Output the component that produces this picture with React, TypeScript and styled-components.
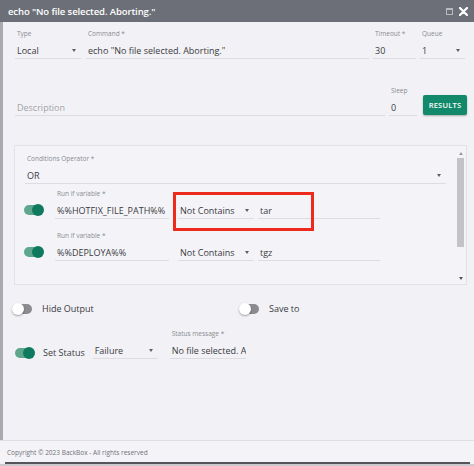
import React from "react";
import styled, { createGlobalStyle } from "styled-components";

const GlobalStyle = createGlobalStyle`
  html, body {
    margin: 0;
    padding: 0;
    background: #f2f2f6;
  }
  * {
    box-sizing: border-box;
  }
`;

const color = {
  header: "#6c6f78",
  bg: "#f2f2f6",
  strip: "#a9a9af",
  text: "#3a3a3e",
  label: "#8a8a90",
  line: "#dcdce1",
  green: "#13896b",
  red: "#ee2a1c"
};

const Frame = styled.div`
  width: 474px;
  height: 466px;
  display: flex;
  flex-direction: column;
  background: ${color.bg};
  font-family: "Open Sans", "Liberation Sans", sans-serif;
  color: ${color.text};
  overflow: hidden;
`;

const Header = styled.div`
  height: 22px;
  flex: none;
  background: ${color.header};
  display: flex;
  align-items: center;
  padding: 0 6px 0 8px;
`;

const Title = styled.div`
  flex: 1;
  color: #ffffff;
  font-size: 9.5px;
  font-weight: 600;
  letter-spacing: -0.1px;
`;

const HeaderIcons = styled.div`
  display: flex;
  align-items: center;
  gap: 6px;
`;

const Body = styled.div`
  flex: 1;
  border-left: 3px solid ${color.strip};
  padding: 7px 7px 0 12px;
  display: flex;
  flex-direction: column;
`;

const Row = styled.div<{ $top?: number }>`
  display: flex;
  align-items: flex-end;
  margin-top: ${(p) => p.$top ?? 0}px;
`;

const FieldWrap = styled.div<{ $w: number; $gap?: number }>`
  width: ${(p) => p.$w}px;
  margin-left: ${(p) => p.$gap ?? 0}px;
  flex: none;
  display: flex;
  flex-direction: column;
`;

const Label = styled.div`
  height: 9px;
  line-height: 9px;
  font-size: 6.5px;
  color: ${color.label};
  white-space: nowrap;
  padding-left: 2px;
`;

const ValueBox = styled.div<{ $placeholder?: boolean }>`
  height: 21px;
  border-bottom: 1px solid ${color.line};
  display: flex;
  align-items: center;
  justify-content: space-between;
  padding: 5px 5px 0 2px;
  font-size: 9px;
  color: ${(p) => (p.$placeholder ? "#a3a3a8" : color.text)};
  white-space: nowrap;
  overflow: hidden;
`;

const ValueText = styled.span`
  flex: none;
`;

const Caret = styled.span`
  flex: none;
  width: 0;
  height: 0;
  border-left: 2.5px solid transparent;
  border-right: 2.5px solid transparent;
  border-top: 3px solid #5e5e64;
`;

const ResultsButton = styled.button`
  margin-left: 6px;
  width: 46px;
  height: 20px;
  margin-bottom: 1px;
  border: none;
  border-radius: 2px;
  background: ${color.green};
  color: #ffffff;
  font-family: inherit;
  font-size: 7.5px;
  font-weight: 600;
  letter-spacing: 0.2px;
  box-shadow: 0 1px 2px rgba(0, 0, 0, 0.3);
  padding: 0;
`;

const Panel = styled.div`
  position: relative;
  margin: 29px 0 0 -1px;
  height: 140px;
  border: 1px solid #e1e1e6;
  background: #f4f4f8;
  display: flex;
  padding: 3px 1px 1px 10px;
`;

const PanelContent = styled.div`
  flex: 1;
  padding-top: 5px;
  display: flex;
  flex-direction: column;
`;

const ScrollBar = styled.div`
  width: 9px;
  margin-left: 4px;
  display: flex;
  flex-direction: column;
  align-items: center;
  justify-content: space-between;
  padding: 3px 0 3px;
`;

const ScrollArrow = styled.span<{ $up?: boolean }>`
  width: 0;
  height: 0;
  border-left: 2.5px solid transparent;
  border-right: 2.5px solid transparent;
  ${(p) =>
    p.$up
      ? "border-bottom: 3px solid #9a9aa0;"
      : "border-top: 3px solid #55555b;"}
`;

const ScrollThumb = styled.div`
  width: 7px;
  height: 89px;
  margin-top: 3px;
  background: #c3c3c7;
  margin-bottom: auto;
`;

const CondRow = styled.div<{ $top: number }>`
  display: flex;
  align-items: flex-end;
  margin-top: ${(p) => p.$top}px;
`;

const ToggleSlot = styled.div`
  width: 19px;
  height: 21px;
  display: flex;
  align-items: center;
  flex: none;
  margin-left: -1px;
  padding-top: 3px;
`;

const Track = styled.span<{ $on?: boolean }>`
  position: relative;
  display: inline-block;
  width: 19px;
  height: 10px;
  border-radius: 5px;
  flex: none;
  background: ${(p) => (p.$on ? "#5fa68f" : "#8c8c90")};
  &::after {
    content: "";
    position: absolute;
    top: -1px;
    ${(p) => (p.$on ? "right: -1px;" : "left: -1px;")}
    width: 12px;
    height: 12px;
    border-radius: 50%;
    background: ${(p) => (p.$on ? "#0f7a5d" : "#ffffff")};
    box-shadow: ${(p) => (p.$on ? "none" : "0 1px 2px rgba(0,0,0,0.35)")};
  }
`;

const Highlight = styled.div`
  position: absolute;
  left: 158px;
  top: 46px;
  width: 141px;
  height: 39px;
  border: 3.5px solid ${color.red};
  pointer-events: none;
`;

const OptionsGrid = styled.div`
  display: grid;
  grid-template-columns: 227px 1fr;
  margin: 17px 0 0 -2px;
  height: 10px;
  align-items: center;
`;

const OptionItem = styled.div`
  display: flex;
  align-items: center;
  gap: 10px;
  font-size: 9px;
  color: ${color.text};
`;

const StatusRow = styled.div`
  display: flex;
  align-items: flex-end;
  margin-top: 17px;
`;

const StatusToggle = styled.div`
  height: 21px;
  display: flex;
  align-items: center;
  gap: 9px;
  font-size: 9px;
  padding-top: 8px;
  white-space: nowrap;
`;

const Footer = styled.div`
  height: 22px;
  flex: none;
  border-top: 1px solid #dedee3;
  background: #f4f4f8;
  display: flex;
  align-items: center;
  padding: 2px 0 0 7px;
  font-size: 6.5px;
  color: #707076;
`;

const BottomLine = styled.div`
  height: 2px;
  flex: none;
  margin: 0 4px 0 5px;
  background: #55565c;
`;

const BottomGap = styled.div`
  height: 2px;
  flex: none;
  background: #c9c9ce;
`;

type FieldProps = {
  label?: string;
  value: string;
  width: number;
  gap?: number;
  select?: boolean;
  placeholder?: boolean;
};

const Field = ({ label, value, width, gap, select, placeholder }: FieldProps) => (
  <FieldWrap $w={width} $gap={gap}>
    {label !== undefined && <Label>{label}</Label>}
    <ValueBox $placeholder={placeholder}>
      <ValueText>{value}</ValueText>
      {select && <Caret />}
    </ValueBox>
  </FieldWrap>
);

const RestoreIcon = () => (
  <svg width="7" height="7" viewBox="0 0 7 7">
    <rect x="0.5" y="0.5" width="6" height="6" fill="none" stroke="#b9bac0" />
    <rect x="0" y="0" width="7" height="2" fill="#b9bac0" />
  </svg>
);

const CloseIcon = () => (
  <svg width="9" height="9" viewBox="0 0 9 9">
    <path d="M1 1 L8 8 M8 1 L1 8" stroke="#ffffff" strokeWidth="2.2" strokeLinecap="round" />
  </svg>
);

export default function App() {
  return (
    <Frame>
      <GlobalStyle />
      <Header>
        <Title>echo "No file selected. Aborting."</Title>
        <HeaderIcons>
          <RestoreIcon />
          <CloseIcon />
        </HeaderIcons>
      </Header>

      <Body>
        <Row>
          <Field label="Type" value="Local" width={66} select />
          <Field label="Command *" value={'echo "No file selected. Aborting."'} width={283} gap={5} />
          <Field label="Timeout *" value="30" width={43} gap={4} />
          <Field label="Queue" value="1" width={45} gap={4} select />
        </Row>

        <Row $top={27}>
          <Field value="Description" width={370} placeholder />
          <Field label="Sleep" value="0" width={28} gap={4} />
          <ResultsButton>RESULTS</ResultsButton>
        </Row>

        <Panel>
          <PanelContent>
            <Field label="Conditions Operator *" value="OR" width={421} select />
            <CondRow $top={5}>
              <ToggleSlot>
                <Track $on />
              </ToggleSlot>
              <Field label="Run if variable *" value="%%HOTFIX_FILE_PATH%%" width={114} gap={12} />
              <Field value="Not Contains" width={76} gap={9} select />
              <Field value="tar" width={122} gap={4} />
            </CondRow>
            <CondRow $top={12}>
              <ToggleSlot>
                <Track $on />
              </ToggleSlot>
              <Field label="Run if variable *" value="%%DEPLOYA%%" width={114} gap={12} />
              <Field value="Not Contains" width={76} gap={9} select />
              <Field value="tgz" width={122} gap={4} />
            </CondRow>
          </PanelContent>
          <ScrollBar>
            <ScrollArrow $up />
            <ScrollThumb />
            <ScrollArrow />
          </ScrollBar>
          <Highlight />
        </Panel>

        <OptionsGrid>
          <OptionItem>
            <Track />
            Hide Output
          </OptionItem>
          <OptionItem>
            <Track />
            Save to
          </OptionItem>
        </OptionsGrid>

        <StatusRow>
          <StatusToggle>
            <Track $on />
            Set Status
          </StatusToggle>
          <Field value="Failure" width={65} gap={8} select />
          <Field label="Status message *" value="No file selected. A" width={76} gap={12} />
        </StatusRow>
      </Body>

      <Footer>Copyright © 2023 BackBox - All rights reserved</Footer>
      <BottomLine />
      <BottomGap />
    </Frame>
  );
}
